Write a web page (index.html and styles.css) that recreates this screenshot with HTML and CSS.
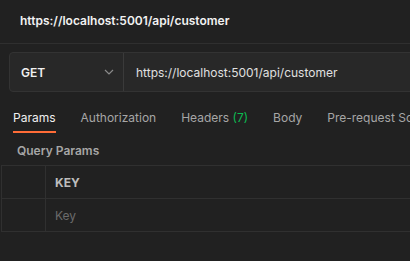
FILE: index.html
```html
<!DOCTYPE html>
<html lang="en">
<head>
  <meta charset="UTF-8" />
  <title>customer request</title>
  <link rel="stylesheet" href="styles.css">
</head>
<body>
  <!--request name at the top-->
  <div class="title-bar">
    <span class="title">https://localhost:5001/api/customer</span>
  </div>

  <!--method + url-->
  <div class="request-bar">
    <div class="method">
      <span class="method-name">GET</span>
      <svg class="chevron" width="10" height="6" viewBox="0 0 10 6">
        <path d="M1 1 L5 5 L9 1" fill="none" stroke="#8a8a8a" stroke-width="1.2" />
      </svg>
    </div>
    <div class="url">https://localhost:5001/api/customer</div>
  </div>

  <!--tabs-->
  <div class="tabs">
    <div class="tab active">Params</div>
    <div class="tab">Authorization</div>
    <div class="tab">Headers <span class="count">(7)</span></div>
    <div class="tab">Body</div>
    <div class="tab">Pre-request Script</div>
  </div>

  <div class="section-label">Query Params</div>

  <div class="params-table">
    <div class="cell check"></div>
    <div class="cell head">KEY</div>
    <div class="cell check"></div>
    <div class="cell placeholder">Key</div>
  </div>
</body>
</html>
```

FILE: styles.css
```css
body {
  margin: 0;
  width: 410px;
  height: 261px;
  overflow: hidden;
  background: #212121;
  font-family: 'Inter', 'Noto Sans', sans-serif;
  color: #e6e6e6;
}

.title-bar {
  height: 44px;
  box-sizing: border-box;
  padding: 0 0 3px 20px;
  display: flex;
  align-items: center;
  border-bottom: 1px solid #2f2f2f;
  background: #212121;
}

.title {
  font-size: 12px;
  font-weight: 600;
  color: #f2f2f2;
}

.request-bar {
  display: flex;
  width: 520px;
  height: 40px;
  margin: 8px 0 0 9px;
  box-sizing: border-box;
  border: 1px solid #333333;
  border-radius: 4px;
  background: #282828;
}

.method {
  width: 114px;
  flex-shrink: 0;
  display: flex;
  align-items: center;
  justify-content: space-between;
  padding: 0 9px 0 11px;
  box-sizing: border-box;
  border-right: 1px solid #3a3a3a;
}

.method-name {
  font-size: 12px;
  font-weight: 600;
  color: #f0f0f0;
}

.url {
  display: flex;
  align-items: center;
  padding-left: 12px;
  font-size: 12px;
  color: #e0e0e0;
}

.tabs {
  display: flex;
  gap: 25px;
  padding-left: 13px;
  margin-top: 18px;
  white-space: nowrap;
}

.tab {
  font-size: 12px;
  color: #a6a6a6;
  padding-bottom: 6px;
  border-bottom: 2px solid transparent;
}

.tab.active {
  color: #f0f0f0;
  border-bottom-color: #ff6c37;
}

.tab .count {
  color: #0cbb52;
}

.section-label {
  padding: 10px 0 0 17px;
  height: 22px;
  font-size: 12px;
  font-weight: 600;
  color: #a6a6a6;
}

.params-table {
  display: grid;
  grid-template-columns: 44px 1fr;
  grid-auto-rows: 33px;
  margin-left: 1px;
  border-left: 1px solid #303030;
  border-top: 1px solid #303030;
}

.cell {
  display: flex;
  align-items: center;
  padding-left: 9px;
  font-size: 12px;
  border-bottom: 1px solid #303030;
}

.cell.check {
  padding: 0;
  border-right: 1px solid #303030;
}

.cell.head {
  font-weight: 700;
  color: #bdbdbd;
}

.cell.placeholder {
  color: #6b6b6b;
}
```
